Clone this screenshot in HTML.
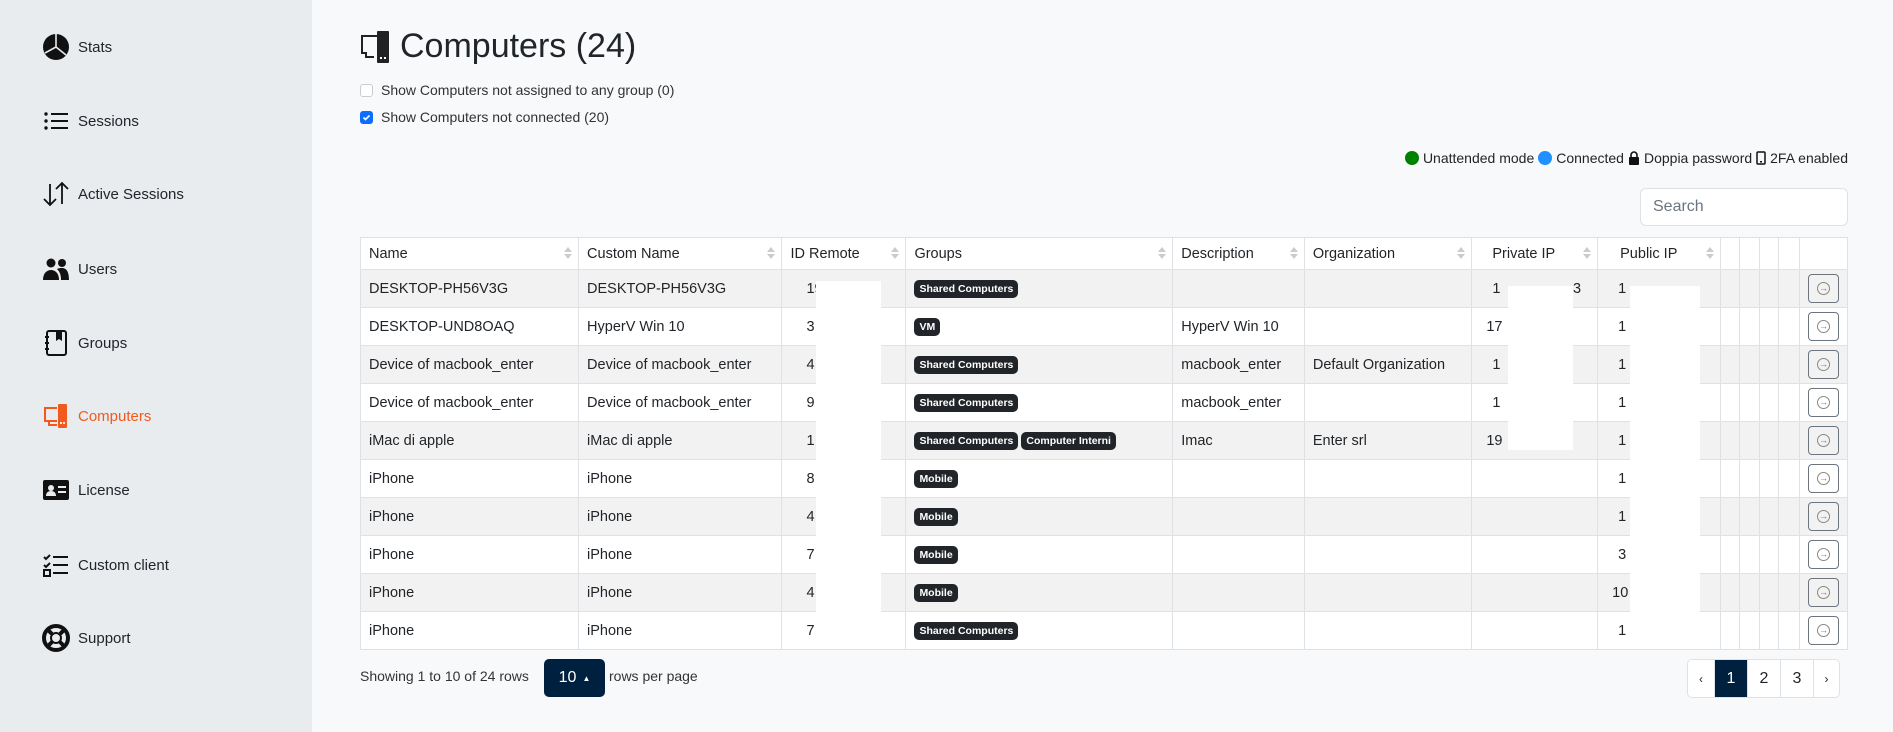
<!DOCTYPE html>
<html><head><meta charset="utf-8"><style>
*{box-sizing:border-box;margin:0;padding:0}
body{width:1893px;height:732px;overflow:hidden;background:#f8f9fa;font-family:"Liberation Sans",sans-serif;color:#212529;font-size:15px;position:relative}
.side{position:absolute;left:0;top:0;width:312px;height:732px;background:#e9ecef}
.nav{position:absolute;left:42px;display:flex;align-items:center;font-size:15px;color:#212529}
.nav svg{width:28px;height:28px;margin-right:8px}
.nav.act{color:#f05a1e}
.title{position:absolute;left:360px;top:27px;font-size:34px;display:flex;align-items:center}
.cb{position:absolute;left:360px;display:flex;align-items:center;font-size:14px;color:#333}
.cb i{width:13px;height:13px;border:1px solid #ccc;border-radius:3px;background:#fff;margin-right:8px;display:inline-block}
.cb i.on{background:#0d6efd;border-color:#0d6efd;position:relative}
.legend{position:absolute;right:45px;top:150px;font-size:14px;display:flex;align-items:center;gap:4px}
.dot{width:14px;height:14px;border-radius:50%;display:inline-block}
.search{position:absolute;left:1640px;top:188px;width:208px;height:38px;border:1px solid #dee2e6;border-radius:6px;background:#fff;padding:9px 12px;font-size:16px;color:#6c757d}
table{position:absolute;left:360px;top:237px;width:1488px;border-collapse:collapse;background:#fff;font-size:14.5px}
td,th{border:1px solid #dee2e6;height:38px;padding:0 8px;text-align:left;font-weight:normal;white-space:nowrap}
th{height:32px;position:relative}
th.s:after{content:"";position:absolute;right:6px;top:9px;width:0;height:0;border-left:4px solid transparent;border-right:4px solid transparent;border-bottom:5px solid #ccc}
th.s:before{content:"";position:absolute;right:6px;top:16px;width:0;height:0;border-left:4px solid transparent;border-right:4px solid transparent;border-top:5px solid #ccc}
tr:nth-child(even) td{background:#f2f2f2}
.b{display:inline-block;background:#212529;color:#fff;font-size:10.5px;font-weight:bold;padding:3px 5px;border-radius:5px;margin-right:3px}
.go{width:31px;height:29px;border:1px solid #6c757d;border-radius:4px;display:flex;align-items:center;justify-content:center;margin:0 auto}
.go span{width:13px;height:13px;border:1px solid #888;border-radius:50%;font-size:9px;line-height:11px;text-align:center;color:#777}
.red{position:absolute;background:#fff}
.foot{position:absolute;left:360px;top:668px;font-size:14px;color:#333}
.pp{position:absolute;left:544px;top:659px;width:61px;height:38px;background:#00203f;color:#fff;border-radius:5px;font-size:16px;display:flex;align-items:center;justify-content:center}
.pg{position:absolute;left:1687px;top:659px;height:39px;display:flex;border:1px solid #dee2e6;border-radius:5px;background:#fff;overflow:hidden}
.pg div{width:33px;display:flex;align-items:center;justify-content:center;font-size:16px;border-left:1px solid #dee2e6}
.pg div:first-child{border-left:none;width:26px;font-size:12px}
.pg div:last-child{width:26px;font-size:12px}
.pg .a{background:#00203f;color:#fff}
</style></head><body>
<div class="side">
<div class="nav" style="top:33px"><svg viewBox="0 0 28 28"><circle cx="14" cy="14" r="13" fill="#111"/><path d="M14 1V14L24 22M14 14L3 20" stroke="#e9ecef" stroke-width="1.6" fill="none"/></svg>Stats</div>
<div class="nav" style="top:107px"><svg viewBox="0 0 28 28"><g fill="#111"><circle cx="4" cy="7" r="1.7"/><circle cx="4" cy="14" r="1.7"/><circle cx="4" cy="21" r="1.7"/><rect x="9" y="6" width="17" height="2"/><rect x="9" y="13" width="17" height="2"/><rect x="9" y="20" width="17" height="2"/></g></svg>Sessions</div>
<div class="nav" style="top:180px"><svg viewBox="0 0 28 28"><path d="M8 4V25M2 19l6 6 6-6M20 24V3M14 9l6-6 6 6" stroke="#111" stroke-width="1.8" fill="none"/></svg>Active Sessions</div>
<div class="nav" style="top:255px"><svg viewBox="0 0 28 28"><g fill="#111"><circle cx="9" cy="8" r="4.5"/><circle cx="20" cy="8" r="4"/><path d="M1 25c0-7 4-10 8-10s8 3 8 10z"/><path d="M15 14c2-1 4-1 5-1 4 0 7 3 7 12h-8c0-5-1-8-4-11z"/></g></svg>Users</div>
<div class="nav" style="top:329px"><svg viewBox="0 0 28 28"><rect x="5" y="2" width="19" height="24" rx="2" fill="none" stroke="#111" stroke-width="2"/><path d="M14 2v10l3-2 3 2V2z" fill="#111"/><path d="M3 8h4M3 14h4M3 20h4" stroke="#111" stroke-width="2"/></svg>Groups</div>
<div class="nav act" style="top:402px"><svg viewBox="0 0 28 28"><path d="M15 6H3v13h12M7 19v4h8" stroke="#f05a1e" stroke-width="2" fill="none"/><rect x="16" y="2" width="9" height="24" rx="1" fill="#f05a1e"/><rect x="18" y="20" width="2" height="2" fill="#e9ecef"/><rect x="21" y="20" width="2" height="2" fill="#e9ecef"/></svg>Computers</div>
<div class="nav" style="top:476px"><svg viewBox="0 0 28 28"><rect x="1" y="4" width="26" height="20" rx="2" fill="#111"/><circle cx="9" cy="12" r="3" fill="#e9ecef"/><path d="M4 20c0-4 3-5 5-5s5 1 5 5z" fill="#e9ecef"/><rect x="16" y="10" width="8" height="2" fill="#e9ecef"/><rect x="16" y="15" width="8" height="2" fill="#e9ecef"/></svg>License</div>
<div class="nav" style="top:551px"><svg viewBox="0 0 28 28"><g stroke="#111" stroke-width="2" fill="none"><path d="M2 6l2 2 4-4M2 14l2 2 4-4"/><rect x="2" y="19" width="6" height="6"/><path d="M11 6h15M11 14h15M11 22h15"/></g></svg>Custom client</div>
<div class="nav" style="top:624px"><svg viewBox="0 0 28 28"><circle cx="14" cy="14" r="12" fill="none" stroke="#111" stroke-width="4"/><circle cx="14" cy="14" r="5" fill="none" stroke="#111" stroke-width="2"/><path d="M5 5l5 5M23 5l-5 5M5 23l5-5M23 23l-5-5" stroke="#111" stroke-width="4"/></svg>Support</div>
</div>

<div class="title"><svg width="30" height="34" viewBox="0 0 30 34" style="margin-right:10px"><path d="M17 6H2v17h4v4h8" stroke="#222" stroke-width="2" fill="none"/><rect x="17" y="1" width="12" height="32" rx="1" fill="#222"/><rect x="20" y="27" width="2" height="2" fill="#fff"/><rect x="24" y="27" width="2" height="2" fill="#fff"/></svg>Computers (24)</div>
<div class="cb" style="top:82px"><i></i>Show Computers not assigned to any group (0)</div>
<div class="cb" style="top:109px"><i class="on"><svg width="11" height="11" viewBox="0 0 11 11" style="position:absolute;left:0;top:0"><path d="M2.5 5.5l2 2 4-4" stroke="#fff" stroke-width="1.6" fill="none"/></svg></i>Show Computers not connected (20)</div>
<div class="legend"><span class="dot" style="background:#008000"></span>Unattended mode <span class="dot" style="background:#1e90ff"></span>Connected <svg width="12" height="14" viewBox="0 0 12 14"><path d="M3 6V4a3 3 0 016 0v2" stroke="#111" stroke-width="1.6" fill="none"/><rect x="1" y="6" width="10" height="8" rx="1" fill="#111"/></svg>Doppia password <svg width="10" height="14" viewBox="0 0 10 14"><rect x="1" y="1" width="8" height="12" rx="1" stroke="#111" stroke-width="1.5" fill="none"/><rect x="4" y="10" width="2" height="1.5" fill="#111"/></svg>2FA enabled</div>
<div class="search">Search</div>

<table>
<colgroup><col style="width:219px"><col style="width:204px"><col style="width:125px"><col style="width:268px"><col style="width:132px"><col style="width:168px"><col style="width:126px"><col style="width:124px"><col style="width:19px"><col style="width:20px"><col style="width:19px"><col style="width:21px"><col style="width:43px"></colgroup>
<tr><th class="s">Name</th><th class="s">Custom Name</th><th class="s">ID Remote</th><th class="s">Groups</th><th class="s">Description</th><th class="s">Organization</th><th class="s" style="padding-left:20px">Private IP</th><th class="s" style="padding-left:22px">Public IP</th><th></th><th></th><th></th><th></th><th></th></tr>
<tr><td>DESKTOP-PH56V3G</td><td>DESKTOP-PH56V3G</td><td style="padding-left:24px">191</td><td><span class="b">Shared Computers</span></td><td></td><td></td><td style="padding-left:20px">1&nbsp;&nbsp;&nbsp;&nbsp;&nbsp;&nbsp;&nbsp;&nbsp;&nbsp;&nbsp;&nbsp;&nbsp;&nbsp;&nbsp;&nbsp;&nbsp;&nbsp;&nbsp;3</td><td style="padding-left:20px">1</td><td></td><td></td><td></td><td></td><td><div class="go"><span>→</span></div></td></tr>
<tr><td>DESKTOP-UND8OAQ</td><td>HyperV Win 10</td><td style="padding-left:24px">3</td><td><span class="b">VM</span></td><td>HyperV Win 10</td><td></td><td style="padding-left:14px">17</td><td style="padding-left:20px">1</td><td></td><td></td><td></td><td></td><td><div class="go"><span>→</span></div></td></tr>
<tr><td>Device of macbook_enter</td><td>Device of macbook_enter</td><td style="padding-left:24px">4</td><td><span class="b">Shared Computers</span></td><td>macbook_enter</td><td>Default Organization</td><td style="padding-left:20px">1</td><td style="padding-left:20px">1</td><td></td><td></td><td></td><td></td><td><div class="go"><span>→</span></div></td></tr>
<tr><td>Device of macbook_enter</td><td>Device of macbook_enter</td><td style="padding-left:24px">9</td><td><span class="b">Shared Computers</span></td><td>macbook_enter</td><td></td><td style="padding-left:20px">1</td><td style="padding-left:20px">1</td><td></td><td></td><td></td><td></td><td><div class="go"><span>→</span></div></td></tr>
<tr><td>iMac di apple</td><td>iMac di apple</td><td style="padding-left:24px">1</td><td><span class="b">Shared Computers</span><span class="b">Computer Interni</span></td><td>Imac</td><td>Enter srl</td><td style="padding-left:14px">19</td><td style="padding-left:20px">1</td><td></td><td></td><td></td><td></td><td><div class="go"><span>→</span></div></td></tr>
<tr><td>iPhone</td><td>iPhone</td><td style="padding-left:24px">8</td><td><span class="b">Mobile</span></td><td></td><td></td><td></td><td style="padding-left:20px">1</td><td></td><td></td><td></td><td></td><td><div class="go"><span>→</span></div></td></tr>
<tr><td>iPhone</td><td>iPhone</td><td style="padding-left:24px">4</td><td><span class="b">Mobile</span></td><td></td><td></td><td></td><td style="padding-left:20px">1</td><td></td><td></td><td></td><td></td><td><div class="go"><span>→</span></div></td></tr>
<tr><td>iPhone</td><td>iPhone</td><td style="padding-left:24px">7</td><td><span class="b">Mobile</span></td><td></td><td></td><td></td><td style="padding-left:20px">3</td><td></td><td></td><td></td><td></td><td><div class="go"><span>→</span></div></td></tr>
<tr><td>iPhone</td><td>iPhone</td><td style="padding-left:24px">4</td><td><span class="b">Mobile</span></td><td></td><td></td><td></td><td style="padding-left:14px">10</td><td></td><td></td><td></td><td></td><td><div class="go"><span>→</span></div></td></tr>
<tr><td>iPhone</td><td>iPhone</td><td style="padding-left:24px">7</td><td><span class="b">Shared Computers</span></td><td></td><td></td><td></td><td style="padding-left:20px">1</td><td></td><td></td><td></td><td></td><td><div class="go"><span>→</span></div></td></tr>
</table>
<div class="red" style="left:816px;top:281px;width:65px;height:359px"></div>
<div class="red" style="left:1508px;top:286px;width:65px;height:164px"></div>
<div class="red" style="left:1630px;top:286px;width:70px;height:354px"></div>

<div class="foot">Showing 1 to 10 of 24 rows</div>
<div class="pp">10 <span style="font-size:8px;margin-left:6px">▲</span></div>
<div class="foot" style="left:609px">rows per page</div>
<div class="pg"><div>‹</div><div class="a">1</div><div>2</div><div>3</div><div>›</div></div>
</body></html>
